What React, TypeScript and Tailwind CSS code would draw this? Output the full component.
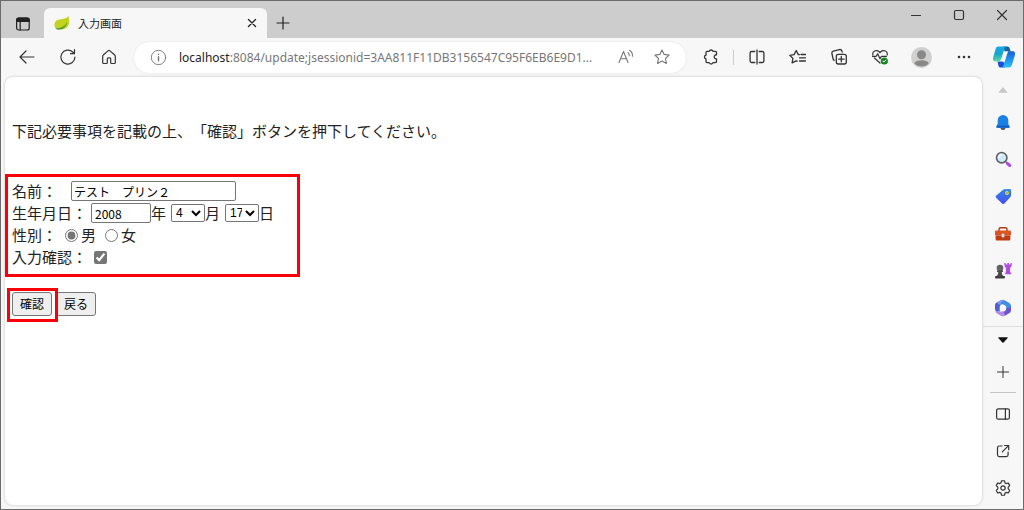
import type { ReactNode } from "react";

type IconProps = { children: ReactNode; size?: number; sw?: number };

function Icon({ children, size = 18, sw = 1.2 }: IconProps) {
  return (
    <svg
      width={size}
      height={size}
      viewBox="0 0 18 18"
      fill="none"
      stroke="currentColor"
      strokeWidth={sw}
      strokeLinecap="round"
      strokeLinejoin="round"
      aria-hidden="true"
      className="shrink-0"
    >
      {children}
    </svg>
  );
}

function ToolButton({
  label,
  width = "w-[41px]",
  children,
}: {
  label: string;
  width?: string;
  children: ReactNode;
}) {
  return (
    <button
      type="button"
      aria-label={label}
      className={`flex h-full shrink-0 items-center justify-center text-[#333] ${width}`}
    >
      {children}
    </button>
  );
}

function SideButton({
  label,
  height = "h-[37px]",
  children,
}: {
  label: string;
  height?: string;
  children: ReactNode;
}) {
  return (
    <button
      type="button"
      aria-label={label}
      className={`flex w-full shrink-0 items-center justify-center text-[#333] ${height}`}
    >
      {children}
    </button>
  );
}

function TitleBar() {
  return (
    <header className="flex h-[37px] shrink-0 bg-[#cdcdcd]">
      <button
        type="button"
        aria-label="タブ操作メニュー"
        className="flex w-[43px] shrink-0 items-center justify-center pt-[9px] text-[#222]"
      >
        <Icon>
          <rect x="2.6" y="3" width="12.6" height="12" rx="2" />
          <path d="M2.6 6.4V5a2 2 0 0 1 2-2h8.6a2 2 0 0 1 2 2v1.4z" fill="currentColor" />
          <path d="M6.2 6.4V15" />
        </Icon>
      </button>
      <div className="mt-[7px] flex w-[223px] items-center rounded-t-md bg-[#f7f7f7] pr-[7px] pl-[10px]">
        <svg width="16" height="16" viewBox="0 0 16 16" aria-hidden="true" className="shrink-0">
          <path
            d="M14.400 1c1.300 4.500 1.200 8.500-1.200 11.200-2.500 2.600-6.800 2.900-10.200 1.800C.4 12.800 0 9.800.9 7.500 3 2.600 11.600 5.600 14.400 1z"
            fill="#c3d21f"
          />
          <path
            d="M1.400 13.300c4.600.5 9.300-1.300 11.800-6.300-.8 5.400-5.400 8.300-10.200 7.400-.8-.2-1.300-.6-1.600-1.100z"
            fill="#3f9a3b"
          />
        </svg>
        <span className="ml-2 flex-1 text-[11px]">入力画面</span>
        <button type="button" aria-label="タブを閉じる" className="text-[#222]">
          <Icon size={16} sw={1.4}>
            <path d="M5 5l8 8M13 5l-8 8" />
          </Icon>
        </button>
      </div>
      <button
        type="button"
        aria-label="新しいタブ"
        className="flex w-8 items-center justify-center pt-[7px] text-[#222]"
      >
        <Icon>
          <path d="M9 3v12M3 9h12" />
        </Icon>
      </button>
      <div className="ml-auto flex h-7 text-[#222]">
        <ToolButton label="最小化" width="w-[43px]">
          <Icon>
            <path d="M4.5 9.5h9" />
          </Icon>
        </ToolButton>
        <ToolButton label="最大化" width="w-[43px]">
          <Icon>
            <rect x="4.5" y="4.5" width="9" height="9" rx="1.5" />
          </Icon>
        </ToolButton>
        <ToolButton label="閉じる" width="w-[43px]">
          <Icon>
            <path d="M4.5 4.5l9 9M13.5 4.5l-9 9" />
          </Icon>
        </ToolButton>
      </div>
    </header>
  );
}

function Toolbar() {
  return (
    <nav className="flex h-[38px] shrink-0 items-center pl-[5px]">
      <ToolButton label="戻る">
        <Icon>
          <path d="M16 9H2M8 3L2 9l6 6" />
        </Icon>
      </ToolButton>
      <ToolButton label="更新">
        <Icon>
          <path d="M15.9 9a7 7 0 1 1-2.2-5l1.6 1.6M15.500 1.700v4h-4" />
        </Icon>
      </ToolButton>
      <ToolButton label="ホーム">
        <Icon>
          <path d="M2.700 8.200a1.600 1.600 0 0 1 .6-1.200L8 2.900a1.500 1.500 0 0 1 2 0L14.700 7a1.600 1.600 0 0 1 .6 1.200v6.300a1 1 0 0 1-1 1h-2.600a1 1 0 0 1-1-1v-3.700a1 1 0 0 0-1-1H8.300a1 1 0 0 0-1 1v3.700a1 1 0 0 1-1 1H3.700a1 1 0 0 1-1-1z" />
        </Icon>
      </ToolButton>
      <div className="ml-[5px] flex h-[31px] min-w-0 flex-1 items-center rounded-full bg-white pr-[15px] pl-4 text-[#777] shadow-[0_0_2px_rgba(0,0,0,0.12)]">
        <Icon size={17} sw={1}>
          <circle cx="9" cy="9" r="7.6" />
          <path d="M9 8.200v4.300M9 5.500v.3" strokeWidth="1.5" />
        </Icon>
        <span className="ml-3 min-w-0 flex-1 truncate pt-px font-['Noto_Sans','Noto_Sans_CJK_JP',sans-serif] text-[12px]">
          <span className="text-[#222]">localhost</span>
          :8084/update;jsessionid=3AA811F11DB3156547C95F6EB6E9D1...
        </span>
        <button type="button" aria-label="音声で読み上げる" className="ml-2">
          <Icon sw={1.1}>
            <path d="M2 14.500L6.500 3.500 11 14.500M3.600 10.800h5.800" />
            <path d="M11 4.600c1 .8 1.400 1.800 1.300 3.200M12.600 2.300c2 1.200 3 3.200 2.800 5.800" />
          </Icon>
        </button>
        <button type="button" aria-label="お気に入りに追加" className="ml-[18px]">
          <Icon sw={1.1}>
            <path d="M9 1.900l2.200 4.500 4.900.7-3.600 3.400.9 4.900L9 13.100l-4.400 2.300.9-4.900L1.900 7.100l4.900-.7z" />
          </Icon>
        </button>
      </div>
      <div className="ml-1 flex h-full shrink-0 items-center">
        <ToolButton label="拡張機能">
          <Icon sw={1.3}>
            <path d="M5 3.400h2.200a2 2 0 0 1 3.800 0h2.500a1 1 0 0 1 1 1v2.400c-2.600-.5-3.400 4-.2 4.100h.2v2.700a1 1 0 0 1-1 1H11a2 2 0 0 1-3.800 0H5a1 1 0 0 1-1-1v-2.700a2 2 0 0 1 0-3.900V4.400a1 1 0 0 1 1-1z" />
          </Icon>
        </ToolButton>
        <div className="flex w-[5px] justify-center">
          <div className="h-[15px] w-px bg-[#ccc]" />
        </div>
        <ToolButton label="画面を分割する">
          <Icon sw={1.3}>
            <path d="M6.800 3.500H3.600a1.500 1.500 0 0 0-1.500 1.500v8a1.500 1.500 0 0 0 1.500 1.500h3.200M11.200 3.500h3.200a1.500 1.500 0 0 1 1.500 1.500v8a1.500 1.500 0 0 1-1.500 1.500h-3.200M9 2v14" />
          </Icon>
        </ToolButton>
        <ToolButton label="お気に入り">
          <Icon sw={1.3}>
            <path d="M10.500 6.600H9.300L7.200 2.500 5.100 6.600l-4.300.7L3.900 10.400l-.8 4.500 4.100-2.100.9.400M12 6.500h4.500M10.500 9.800h6M10.500 13h6" />
          </Icon>
        </ToolButton>
        <ToolButton label="コレクション">
          <Icon sw={1.3}>
            <rect x="6.3" y="6.3" width="10" height="9.7" rx="2" />
            <path d="M11.300 8.500v5.300M8.700 11.200H14M4.200 12.300a2 2 0 0 1-1.100-1.500L1.900 5.500a2 2 0 0 1 1.400-2.300l6.200-1.600A2 2 0 0 1 12 3.200l.2 1" />
          </Icon>
        </ToolButton>
        <ToolButton label="ブラウザーのエッセンシャル">
          <Icon sw={1.2}>
            <path d="M9 15L3.400 10M1.800 7c-.7-4.500 4.800-6 7.200-2.300C11.400 1 16.900 2.500 16.200 7M1.500 8.300h3.700l1.500-2.600 2.300 5 1.500-2.400h5" />
            <circle cx="13.3" cy="13" r="3.6" fill="#168321" stroke="none" />
            <path d="M11.800 13l1.100 1.100 2-2.100" stroke="#fff" strokeWidth="1" />
          </Icon>
        </ToolButton>
        <ToolButton label="プロファイル" width="w-[43px]">
          <svg width="21" height="21" viewBox="0 0 21 21" aria-hidden="true">
            <circle cx="10.5" cy="10.5" r="10.5" fill="#d0d0d0" />
            <circle cx="10.5" cy="7.7" r="4.5" fill="#8b8988" />
            <path d="M3.200 16.300c1.500-4 13.100-4 14.600 0a10 10 0 0 1-14.600 0z" fill="#8b8988" />
          </svg>
        </ToolButton>
        <ToolButton label="設定など">
          <Icon>
            <g fill="currentColor" stroke="none">
              <circle cx="4" cy="9" r="1.3" />
              <circle cx="9" cy="9" r="1.3" />
              <circle cx="14" cy="9" r="1.3" />
            </g>
          </Icon>
        </ToolButton>
        <ToolButton label="Copilot" width="w-[39px]">
          <svg width="24" height="24" viewBox="0 0 24 24" aria-hidden="true">
            <defs>
              <linearGradient id="cpA" x1="0" y1="0" x2="0" y2="1">
                <stop offset="0" stopColor="#1aa9e8" />
                <stop offset=".5" stopColor="#16a4cf" />
                <stop offset="1" stopColor="#5fdc9a" />
              </linearGradient>
              <linearGradient id="cpB" x1="0" y1="0" x2="0" y2="1">
                <stop offset="0" stopColor="#1a5fd0" />
                <stop offset=".5" stopColor="#1f8ff0" />
                <stop offset="1" stopColor="#2cc3f5" />
              </linearGradient>
            </defs>
            <path d="M11 1.500h4.500c1.500 0 2 1 2.400 2.500l.8 2.500h-6z" fill="#14679f" />
            <path d="M8 22.500h5l-1.500-6H5.500l.8 3.500c.3 1.500.7 2.500 1.700 2.500z" fill="#1a4fd8" />
            <path d="M6 1.500h8.500c-1 0-1.500.6-2 2l-3.200 10c-.7 2.200-1.700 3-3.500 3H3.500c-2.500 0-3-2-2.300-4.200l2.500-8.500c.5-1.500 1.100-2.300 2.300-2.300z" fill="url(#cpA)" />
            <path d="M17 6.300h3.500c2.500 0 3 2 2.300 4.200l-2.900 9.500c-.5 1.700-1.500 2.500-2.900 2.500H9.500c1 0 1.500-.6 2-2l2.700-11c.5-2 1.300-3.200 2.800-3.200z" fill="url(#cpB)" />
            <path d="M13.700 6.500H16l-3.300 10h-2.600z" fill="#f3fbff" />
          </svg>
        </ToolButton>
      </div>
    </nav>
  );
}

function Sidebar() {
  return (
    <aside className="flex w-10 shrink-0 flex-col items-center">
      <SideButton label="上へスクロール" height="h-7">
        <svg width="10" height="6" viewBox="0 0 10 6" aria-hidden="true">
          <path d="M5 0l4.700 5.800H.3z" fill="#c6c6c6" />
        </svg>
      </SideButton>
      <SideButton label="通知">
        <svg width="16" height="17" viewBox="0 0 16 17" aria-hidden="true">
          <path d="M5.500 13.500h5a2.500 2.500 0 0 1-5 0z" fill="#555" />
          <path d="M8 1a5.300 5.300 0 0 1 5.300 5.300v3.500l1.200 2.600c.3.800 0 1.300-.8 1.300H2.300c-.8 0-1.100-.5-.8-1.300l1.200-2.600V6.300A5.300 5.300 0 0 1 8 1z" fill="#1b82e2" />
          <path d="M2 11.500h12l.5 1c.3.700 0 1.200-.8 1.200H2.300c-.8 0-1.100-.5-.8-1.200z" fill="#1160c9" />
        </svg>
      </SideButton>
      <SideButton label="検索">
        <svg width="17" height="17" viewBox="0 0 17 17" aria-hidden="true">
          <path d="M11 11l1.500 1" stroke="#666" strokeWidth="2" />
          <path d="M12.300 12.300l2.500 2.200" stroke="#b146e8" strokeWidth="3" strokeLinecap="round" />
          <circle cx="6.7" cy="6.7" r="5.2" fill="#cfeafa" stroke="#5f5f5f" strokeWidth="1.6" />
          <path d="M4 6.500A2.800 2.800 0 0 1 7 4" stroke="#fff" strokeWidth="1.3" fill="none" />
        </svg>
      </SideButton>
      <SideButton label="ショッピング">
        <svg width="17" height="17" viewBox="0 0 17 17" aria-hidden="true">
          <defs>
            <linearGradient id="tag" x1="0" y1="0" x2="0" y2="1">
              <stop offset="0" stopColor="#2c8be8" />
              <stop offset="1" stopColor="#4b4bee" />
            </linearGradient>
          </defs>
          <path d="M9.500 1.200l5-.2c1 0 1.600.6 1.600 1.500v4.700c0 .7-.2 1.200-.7 1.700l-6 6.500c-.7.700-1.600.7-2.300 0L1.300 10c-.8-.8-.8-1.700 0-2.400L7.800 1.900c.5-.5 1-.7 1.700-.7z" fill="url(#tag)" />
          <circle cx="12" cy="5" r="1.9" fill="#f7d84a" />
          <circle cx="12" cy="5" r=".8" fill="#6d8f7b" />
        </svg>
      </SideButton>
      <SideButton label="ツール">
        <svg width="18" height="16" viewBox="0 0 18 16" aria-hidden="true">
          <path d="M5 5V3.500c0-1 .6-1.700 1.600-1.700h4.800c1 0 1.600.7 1.600 1.700V5" fill="none" stroke="#a33a18" strokeWidth="1.4" />
          <rect x="1" y="4.5" width="16" height="5" rx="1.3" fill="#dc5424" />
          <path d="M1.600 9.500h14.800V13c0 .9-.5 1.500-1.400 1.500H3c-.9 0-1.400-.6-1.400-1.500z" fill="#bd3c12" />
          <rect x="7.6" y="7.4" width="2.8" height="4" rx="1" fill="#d9dce2" />
        </svg>
      </SideButton>
      <SideButton label="ゲーム">
        <svg width="18" height="18" viewBox="0 0 18 18" aria-hidden="true">
          <path d="M10.200 1l1.600.3.300 1.300h1.200V1h1.700v1.600h1.200l.3-1.300L18 1l-.6 3.800-1.300 1v3.700l1.400 2.700H11L11.900 9.500V5.800l-1.200-1z" fill="#b04de6" />
          <circle cx="6" cy="6" r="3.3" fill="#636363" />
          <path d="M3 8.600h6v1.300H7.800c0 2.200.6 3.200 1.800 4.100H2.400c1.200-.9 1.800-1.900 1.800-4.100H3z" fill="#4c4c4c" />
          <rect x="1" y="14" width="10" height="2.6" rx="1" fill="#3f3f3f" />
        </svg>
      </SideButton>
      <SideButton label="Microsoft 365">
        <svg width="18" height="18" viewBox="0 0 18 18" aria-hidden="true">
          <path d="M6.300 1.500C7.600.7 9.600.7 11 1.500L7.200 5.800C6 6.500 5.700 7.500 5.700 9v3.500L2.500 12.700C1.500 12 1 11 1 9.500v-3c0-1.500.6-2.300 1.700-2.900z" fill="#4f5fd6" />
          <path d="M11 1.500l4 2.200c1.300.8 2 1.800 2 3.300v3.500l-4.700-.500V9c0-1-.4-1.900-1.300-2.400L7.800 5c.2-1.500 1.500-3 3.200-3.500z" fill="#3f8fe6" />
          <path d="M17 7v4c0 1.500-.6 2.500-1.900 3.300l-3.700 2.100c-1 .6-2.200.7-3.400.4l-.5-4.300h2.200c1.500-.3 2.600-1.300 2.600-3.500 1.600.3 3.900-.2 4.700-2z" fill="#6c56cf" />
          <path d="M1.500 11.500c1 1.300 2.700 1.800 4.200.5 1 .8 2.500 1.300 4.300 1.200l1 3.400c-1.500.8-3.300.7-4.700-.1L3 14.500c-1-.7-1.500-1.700-1.500-3z" fill="#b48be6" />
          <path d="M3 3.500l3.300-2c1.300-.8 3-.8 4.300-.2C8.500 2 7.500 3.500 7 5.500 5.500 6 4.500 5.500 3 3.500z" fill="#7a9fe8" />
          <path d="M9 5.600l3 1.700v3.400l-3 1.700-3-1.700V7.300z" fill="#f7f7f7" />
        </svg>
      </SideButton>
      <div className="h-px w-full shrink-0 bg-[#dedede]" />
      <SideButton label="下へスクロール" height="h-[25px]">
        <svg width="10" height="6" viewBox="0 0 10 6" aria-hidden="true">
          <path d="M1 .2h8c.7 0 .9.6.5 1L5.600 5.500c-.3.300-.9.300-1.200 0L.5 1.200C.1.800.3.200 1 .2z" fill="#111" />
        </svg>
      </SideButton>
      <SideButton label="サイドバーに追加" height="h-10">
        <Icon sw={1}>
          <path d="M9 3.500v11M3.500 9h11" />
        </Icon>
      </SideButton>
      <div className="mb-[2px] h-px w-[26px] shrink-0 bg-[#c4c4c4]" />
      <SideButton label="サイドバー">
        <Icon sw={1.2}>
          <rect x="2.6" y="3.8" width="12.8" height="10.4" rx="1.8" />
          <path d="M11.400 3.800v10.400" />
        </Icon>
      </SideButton>
      <SideButton label="リンクを外部で開く">
        <Icon sw={1.2}>
          <path d="M8 4H5.300a1.800 1.800 0 0 0-1.800 1.800v7a1.800 1.800 0 0 0 1.800 1.800h7a1.800 1.800 0 0 0 1.800-1.800V10M10.500 3.500h4.200v4.200M14.500 3.700L8.300 9.900" />
        </Icon>
      </SideButton>
      <SideButton label="設定">
        <Icon sw={1.2}>
          <path d="M7.500 1.900a8 8 0 0 1 3 0l.5 2 1.200.7 2-.6a7.500 7.500 0 0 1 1.500 2.600l-1.500 1.500v1.800l1.500 1.500a7.500 7.500 0 0 1-1.500 2.600l-2-.6-1.200.7-.5 2a8 8 0 0 1-3 0l-.5-2-1.200-.7-2 .6a7.500 7.500 0 0 1-1.500-2.600l1.500-1.500V8.100L2.300 6.600A7.500 7.500 0 0 1 3.800 4l2 .6L7 3.900z" />
          <circle cx="9" cy="9" r="2.2" />
        </Icon>
      </SideButton>
    </aside>
  );
}

const control =
  "rounded-[2px] border border-[#767676] bg-white text-[12px] leading-4 text-black";
const picker =
  "h-[18px] w-[34px] rounded-[2px] border border-[#767676] bg-white font-['Liberation_Sans',sans-serif] text-[12px] leading-4 text-black";
const action =
  "h-6 w-10 rounded-[3px] border border-[#767676] bg-[#efefef] text-center text-[12px] leading-4 text-black";

function EntryForm() {
  return (
    <form
      className="text-[15px] leading-[22px] [text-spacing-trim:space-all]"
      onSubmit={(e) => e.preventDefault()}
    >
      <p className="pl-[7px]">
        下記必要事項を記載の上、「確認」ボタンを押下してください。
      </p>
      <div className="mt-8 w-[295px] max-w-full border-3 border-[#fb0007] pt-[3px] pb-[6px] pl-1">
        <div className="flex h-[22px] items-center">
          <label htmlFor="name" className="w-[59px]">
            名前：
          </label>
          <input
            id="name"
            type="text"
            defaultValue="テスト　プリン２"
            className={`h-5 w-[165px] px-[2px] ${control}`}
          />
        </div>
        <div className="flex h-[22px] items-center">
          <label htmlFor="year" className="mr-1">
            生年月日：
          </label>
          <input
            id="year"
            type="text"
            defaultValue="2008"
            className={`h-5 w-[60px] px-[3px] ${control}`}
          />
          <label htmlFor="year" className="mr-[5px]">
            年
          </label>
          <select id="month" defaultValue="4" className={picker}>
            <option>4</option>
          </select>
          <label htmlFor="month" className="mr-[5px]">
            月
          </label>
          <select id="day" defaultValue="17" className={picker}>
            <option>17</option>
          </select>
          <label htmlFor="day">日</label>
        </div>
        <div className="flex h-[22px] items-center" role="radiogroup" aria-label="性別">
          <span className="mr-2">性別：</span>
          <input
            id="male"
            type="radio"
            name="gender"
            defaultChecked
            className="mr-[3px] size-[13px] accent-[#767676]"
          />
          <label htmlFor="male" className="mr-[9px]">
            男
          </label>
          <input
            id="female"
            type="radio"
            name="gender"
            className="mr-[3px] size-[13px] accent-[#767676]"
          />
          <label htmlFor="female">女</label>
        </div>
        <div className="flex h-[22px] items-center">
          <label htmlFor="check" className="mr-[7px]">
            入力確認：
          </label>
          <input
            id="check"
            type="checkbox"
            defaultChecked
            className="size-[13px] accent-[#767676]"
          />
        </div>
      </div>
      <div className="mt-[15px] flex gap-1 pl-[7px]">
        <div className="relative z-10 flex">
          <button type="submit" className={action}>
            確認
          </button>
          <div className="pointer-events-none absolute -top-1 -right-[6px] -bottom-[6px] -left-[5px] border-3 border-[#fb0007]" />
        </div>
        <button type="button" className={action}>
          戻る
        </button>
      </div>
    </form>
  );
}

export default function App() {
  return (
    <div className="flex min-h-screen flex-col border border-[#6b6b6b] bg-[#f7f7f7] font-['Noto_Sans_CJK_JP',sans-serif] text-[#222]">
      <TitleBar />
      <Toolbar />
      <div className="flex flex-1">
        <main className="mt-px mr-px mb-1 ml-1 min-w-0 flex-1 rounded-lg bg-white pt-[43px] shadow-[0_0_3px_rgba(0,0,0,0.22)]">
          <EntryForm />
        </main>
        <Sidebar />
      </div>
    </div>
  );
}
